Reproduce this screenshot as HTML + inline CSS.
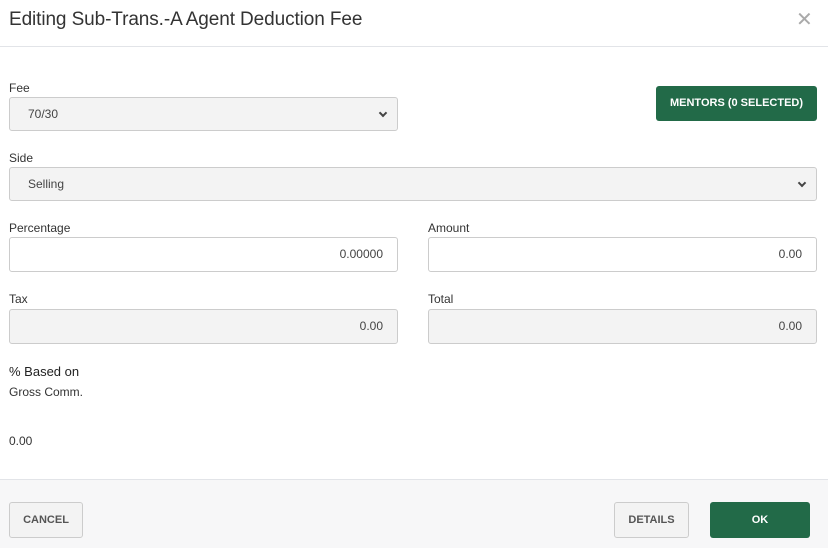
<!DOCTYPE html>
<html><head><style>
*{box-sizing:border-box;margin:0;padding:0}
body{width:828px;height:548px;background:#fff;font-family:"Liberation Sans",sans-serif;color:#333;position:relative;overflow:hidden}
.a{position:absolute}
.title{left:9px;top:9px;font-size:19px;color:#333;letter-spacing:-0.1px}
.close{left:796px;top:7px;font-size:20px;color:#aaa}
.hr{left:0;top:46px;width:828px;height:1px;background:#e2e4e8}
.lbl{font-size:12px;color:#333}
.box{border:1px solid #ccc;border-radius:3px;height:34px;font-size:12px;color:#444;line-height:32px}
.g{background:#f3f3f3}
.r{text-align:right;padding-right:14px}
.sel{padding-left:18px}
.chev{position:absolute;right:11px;top:12px;width:6px;height:6px;border-right:2px solid #444;border-bottom:2px solid #444;transform:rotate(45deg)}
.btn{border-radius:3px;font-size:11px;font-weight:bold;text-align:center}
.foot{left:0;top:479px;width:828px;height:69px;background:#f7f7f8;border-top:1px solid #e2e4e8}
</style></head><body>
<div class="a title">Editing Sub-Trans.-A Agent Deduction Fee</div>
<div class="a close">✕</div>
<div class="a hr"></div>
<div class="a lbl" style="left:9px;top:81px">Fee</div>
<div class="a box g sel" style="left:9px;top:97px;width:389px">70/30<span class="chev"></span></div>
<div class="a btn" style="left:656px;top:86px;width:161px;height:35px;background:#226a48;color:#fff;line-height:35px">MENTORS (0 SELECTED)</div>
<div class="a lbl" style="left:9px;top:151px">Side</div>
<div class="a box g sel" style="left:9px;top:167px;width:808px">Selling<span class="chev"></span></div>
<div class="a lbl" style="left:9px;top:221px">Percentage</div>
<div class="a box r" style="left:9px;top:237px;width:389px;height:35px">0.00000</div>
<div class="a lbl" style="left:428px;top:221px">Amount</div>
<div class="a box r" style="left:428px;top:237px;width:389px;height:35px">0.00</div>
<div class="a lbl" style="left:9px;top:292px">Tax</div>
<div class="a box g r" style="left:9px;top:309px;width:389px;height:35px">0.00</div>
<div class="a lbl" style="left:428px;top:292px">Total</div>
<div class="a box g r" style="left:428px;top:309px;width:389px;height:35px">0.00</div>
<div class="a" style="left:9px;top:364px;font-size:13px;color:#222">% Based on</div>
<div class="a lbl" style="left:9px;top:385px">Gross Comm.</div>
<div class="a lbl" style="left:9px;top:434px">0.00</div>
<div class="a foot"></div>
<div class="a btn" style="left:9px;top:502px;width:74px;height:36px;border:1px solid #ccc;background:#f3f3f3;color:#555;line-height:34px">CANCEL</div>
<div class="a btn" style="left:614px;top:502px;width:75px;height:36px;border:1px solid #ccc;background:#f3f3f3;color:#555;line-height:34px">DETAILS</div>
<div class="a btn" style="left:710px;top:502px;width:100px;height:36px;background:#226a48;color:#fff;line-height:36px">OK</div>
</body></html>
